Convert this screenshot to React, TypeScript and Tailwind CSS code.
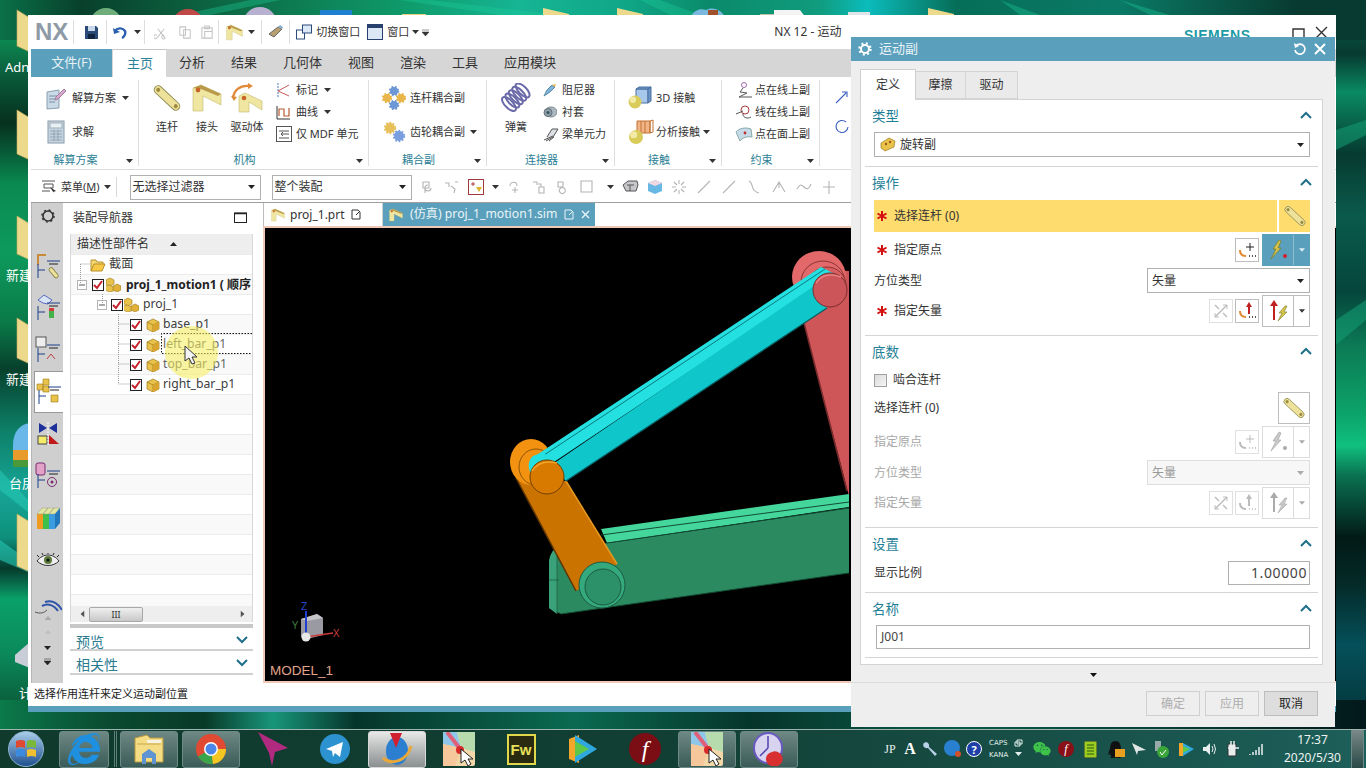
import React from "react";
import { FaInternetExplorer, FaWeixin, FaQq } from "react-icons/fa";

type N = React.ReactNode;

const Caret = ({ c = "#333", w = 7 }: { c?: string; w?: number }) => (
  <svg width={w} height={4} viewBox="0 0 7 4" className="shrink-0"><path d="M0 0h7L3.5 4z" fill={c} /></svg>
);
const Up = () => (
  <svg className="-mt-[3px]" width="12" height="8" viewBox="0 0 12 8"><path d="M1 7l5-5 5 5" fill="none" stroke="#1f6f8a" strokeWidth="2" /></svg>
);
const Down = () => (
  <svg className="-mt-[3px]" width="12" height="8" viewBox="0 0 12 8"><path d="M1 1l5 5 5-5" fill="none" stroke="#1f6f8a" strokeWidth="2" /></svg>
);

/* ---------- CAD icons ---------- */
const BarIcon = ({ s = 28 }: { s?: number }) => (
  <svg width={s} height={s} viewBox="0 0 28 28">
    <g transform="rotate(43 14 14)">
      <rect x="-2" y="10" width="32" height="8" rx="4" fill="#eee29a" stroke="#8f8a52" />
      <circle cx="2" cy="14" r="2" fill="#9b8a40" />
      <circle cx="26" cy="14" r="2" fill="#9b8a40" />
    </g>
  </svg>
);
const JointIcon = ({ s = 30 }: { s?: number }) => (
  <svg width={s} height={s} viewBox="0 0 30 30">
    <path d="M1 28V5l8-3 20 9v11L11 13v15z" fill="#efe6a2" stroke="#c4b870" strokeWidth=".6" />
    <path d="M1 5l8-3 20 9-3 2L9 6z" fill="#b99a4a" />
    <circle cx="6" cy="7" r="2.4" fill="#c8662a" />
  </svg>
);
const DriverIcon = () => (
  <svg width="32" height="32" viewBox="0 0 32 32">
    <path d="M8 30V14l6-3 17 8v9L18 20v10z" fill="#efe6a2" stroke="#c4b870" strokeWidth=".6" />
    <circle cx="13" cy="16" r="2.3" fill="#c8662a" />
    <path d="M2 16C3 8 9 3 18 4" fill="none" stroke="#e08a3a" strokeWidth="2.4" />
    <path d="M17 1l5 3-5 3zM0 14l3 5 3-4z" fill="#e08a3a" />
  </svg>
);
const SolIcon = () => (
  <svg width="22" height="24" viewBox="0 0 22 24">
    <path d="M2 6l12-2v18l-12 1z" fill="#c9d9e6" stroke="#8aa0b0" />
    <path d="M4 10h8M4 13h8M4 16h6" stroke="#7a92a5" />
    <path d="M11 11l8-8 2 2-8 8-3 1z" fill="#d9a6d0" stroke="#a0809a" />
  </svg>
);
const CalcIcon = () => (
  <svg width="18" height="24" viewBox="0 0 18 24">
    <rect x="1" y="1" width="16" height="22" fill="#c6d4df" stroke="#8b9ca9" />
    <rect x="3" y="3" width="12" height="5" fill="#e8f0f5" stroke="#9fb0bb" />
    <path d="M3 11h12M3 14h12M3 17h12M3 20h12M7 10v11M11 10v11" stroke="#92a5b3" />
  </svg>
);
const MarkIcon = () => (
  <svg width="15" height="16" viewBox="0 0 15 16">
    <path d="M2 1v14" stroke="#4a7ab0" strokeWidth="1" strokeDasharray="2 1" />
    <path d="M2 9l11-6M2 9l11 5" stroke="#c85a5a" />
  </svg>
);
const CurveIcon = () => (
  <svg width="15" height="15" viewBox="0 0 15 15">
    <path d="M1 1v13h13" fill="none" stroke="#333" />
    <path d="M3 11V4h5v7h5V3" fill="none" stroke="#b65a30" strokeWidth="1.2" />
  </svg>
);
const MdfIcon = () => (
  <svg width="16" height="16" viewBox="0 0 16 16">
    <rect x=".5" y=".5" width="15" height="15" fill="none" stroke="#555" />
    <path d="M3 5h10M13 8H5l2-2M5 8l2 2M3 12h10" fill="none" stroke="#555" />
  </svg>
);
const GearDot = ({ x, y, c, r = 4 }: { x: number; y: number; c: string; r?: number }) => (
  <g>
    <circle cx={x} cy={y} r={r} fill={c} stroke={c} strokeWidth="2.4" strokeDasharray="1.6 1.6" />
    <circle cx={x} cy={y} r={r - 1} fill={c} />
  </g>
);
const GearsA = () => (
  <svg width="24" height="24" viewBox="0 0 24 24">
    <GearDot x={12} y={5} c="#6e97d5" />
    <GearDot x={5} y={12} c="#e8b64a" />
    <GearDot x={19} y={12} c="#e8b64a" />
    <GearDot x={12} y={19} c="#6e97d5" />
  </svg>
);
const GearsB = () => (
  <svg width="24" height="24" viewBox="0 0 24 24">
    <GearDot x={8} y={8} c="#e8c05a" r={5} />
    <GearDot x={17} y={16} c="#7a9fe0" r={5} />
  </svg>
);
const SpringIcon = () => (
  <svg width="30" height="30" viewBox="0 0 30 30">
    {[0, 1, 2, 3, 4].map((i) => (
      <ellipse key={i} cx={8 + i * 3.4} cy={21 - i * 3.4} rx="9" ry="4" fill="none" stroke="#6a6aa8" strokeWidth="2" transform={`rotate(45 ${8 + i * 3.4} ${21 - i * 3.4})`} />
    ))}
  </svg>
);
const DamperIcon = () => (
  <svg width="14" height="14" viewBox="0 0 14 14">
    <path d="M1 13l3-6 5-5 3 2-5 5z" fill="#7db3d8" stroke="#5a8aa8" />
    <path d="M9 2l3 2 1-3z" fill="#e8b64a" />
  </svg>
);
const BushIcon = () => (
  <svg width="14" height="14" viewBox="0 0 14 14">
    <ellipse cx="8" cy="7" rx="6" ry="5" fill="#aab8c0" stroke="#7d8a92" />
    <ellipse cx="5" cy="7.5" rx="4" ry="4" fill="#8fa0aa" stroke="#606d75" />
    <circle cx="5" cy="7.5" r="1.6" fill="#35565f" />
  </svg>
);
const BeamIcon = () => (
  <svg width="16" height="15" viewBox="0 0 16 15">
    <path d="M1 13l9-4M4 10l5-8h6l-5 8-7 4M6 14l5-4" fill="#dcdfe4" stroke="#555" />
  </svg>
);
const Ball = ({ x, y, r }: { x: number; y: number; r: number }) => (
  <g>
    <circle cx={x} cy={y} r={r} fill="#d9cb5a" />
    <circle cx={x - r / 3} cy={y - r / 3} r={r / 2} fill="#f2eaa6" />
  </g>
);
const Contact3D = () => (
  <svg width="24" height="24" viewBox="0 0 24 24">
    <path d="M8 3h12v14H8z" fill="#a7c8ea" stroke="#4a70a0" />
    <path d="M8 3l3-2h12l-3 2zM20 3l3-2v14l-3 2z" fill="#6c95c8" stroke="#4a70a0" />
    <Ball x={7} y={16} r={6.5} />
  </svg>
);
const Contact2 = () => (
  <svg width="26" height="26" viewBox="0 0 26 26">
    <path d="M9 2h13v12H9z" fill="#f1b58a" stroke="#c2702f" />
    <path d="M13 2v12M17 2v12M22 2l3-1v12l-3 1z" fill="none" stroke="#c2702f" />
    <Ball x={8} y={18} r={7} />
  </svg>
);
const PtLine = () => (
  <svg width="18" height="16" viewBox="0 0 18 16">
    <circle cx="9" cy="3" r="2.5" fill="none" stroke="#a06ab0" />
    <path d="M8 6L5 10l7 1L4 15h13" fill="none" stroke="#555" />
  </svg>
);
const LineLine = () => (
  <svg width="18" height="16" viewBox="0 0 18 16">
    <circle cx="10" cy="6" r="4" fill="none" stroke="#b03a3a" />
    <path d="M1 10l7-3M8 10c0 4 5 5 8 3" fill="none" stroke="#555" />
  </svg>
);
const PtFace = () => (
  <svg width="18" height="16" viewBox="0 0 18 16">
    <path d="M1 6c3-4 10-5 15-3l1 8c-5-1-10 1-12 4z" fill="#c6dae8" stroke="#8aa" />
    <circle cx="10" cy="7" r="1.4" fill="#c03030" />
  </svg>
);
const Faint = ({ d, c = "#b4b4b4", s = 16 }: { d: string; c?: string; s?: number }) => (
  <svg width={s} height={s} viewBox="0 0 16 16" className="shrink-0"><path d={d} fill="none" stroke={c} strokeWidth="1.1" /></svg>
);

const Row = ({ icon, text, caret, cls }: { icon: N; text: string; caret?: boolean; cls: string }) => (
  <div className={"flex items-center " + cls}>
    {icon}
    <span className="whitespace-nowrap">{text}</span>
    {caret && <span className="ml-[1px]"><Caret /></span>}
  </div>
);
const Big = ({ icon, text }: { icon: N; text: string }) => (
  <div className="flex w-[40px] flex-col items-center pt-[6px]">
    <div className="flex h-[30px] items-center">{icon}</div>
    <span className="mt-[6px] leading-[16px] whitespace-nowrap">{text}</span>
  </div>
);
const Group = ({ cls, title, children }: { cls: string; title: string; children: N }) => (
  <div className={"flex shrink-0 " + cls}>
    <div className="flex min-w-0 flex-1 flex-col">
      <div className="h-[74px]">{children}</div>
      <div className="flex h-[19px] items-center pt-[2px]">
        <span className="flex-1 text-center text-[#2b8094]">{title}</span>
        <span className="flex w-[18px] justify-center"><Caret /></span>
      </div>
    </div>
    <div className="my-[3px] w-px bg-[#dedede]" />
  </div>
);

/* ---------- navigator ---------- */
const Check = () => (
  <svg width="12" height="12" viewBox="0 0 12 12" className="shrink-0">
    <rect x=".5" y=".5" width="11" height="11" fill="#fff" stroke="#222" />
    <path d="M2 6l3 3 5-7" fill="none" stroke="#c8202a" strokeWidth="2" />
  </svg>
);
const Box = () => (
  <svg width="10" height="10" viewBox="0 0 10 10" className="shrink-0">
    <rect x=".5" y=".5" width="9" height="9" fill="#fff" stroke="#b5b5b5" />
    <path d="M2 5h6" stroke="#555" />
  </svg>
);
const Cube = () => (
  <svg width="14" height="14" viewBox="0 0 14 14" className="shrink-0">
    <path d="M1 4l6-3 6 3v7l-6 3-6-3z" fill="#e8c24a" stroke="#9c7a1a" strokeWidth=".7" />
    <path d="M1 4l6 3 6-3M7 7v7" fill="none" stroke="#9c7a1a" strokeWidth=".7" />
    <path d="M7 7l6-3v7l-6 3z" fill="#d9a52e" />
  </svg>
);
const Cubes = () => (
  <svg width="15" height="15" viewBox="0 0 15 15" className="shrink-0">
    <path d="M4 1l4 2v4l-4 2-4-2V3z" fill="#e8c24a" stroke="#9c7a1a" strokeWidth=".6" />
    <path d="M3.500 8l4 2v4l-4 1-4-2V9z" fill="#e8c24a" stroke="#9c7a1a" strokeWidth=".6" />
    <path d="M11 7l4 2v4l-4 2-4-2V9z" fill="#e0b038" stroke="#9c7a1a" strokeWidth=".6" />
  </svg>
);
const FolderOpen = () => (
  <svg width="16" height="14" viewBox="0 0 16 14" className="shrink-0">
    <path d="M1 13V2h5l1 2h6v2" fill="#f2d777" stroke="#b8902a" />
    <path d="M1 13l3-7h11l-3 7z" fill="#f7c846" stroke="#b8902a" />
  </svg>
);
const TreeRow = ({ pl, lead, mid, name, bold, odd, muted }: { pl: string; lead?: N; mid: N; name: N; bold?: boolean; odd?: boolean; muted?: boolean }) => (
  <div className={"flex h-[20px] items-center overflow-hidden whitespace-nowrap border-t border-[#ececec] " + pl + (odd ? " bg-[#f9f9f9]" : " bg-white")}>
    {lead}
    {mid}
    <span className={(bold ? "ml-[5px] text-[12px] font-bold text-[#222]" : "ml-[3px] text-[#3c3c3c]") + (muted ? " opacity-80" : "")}>{name}</span>
  </div>
);

/* ---------- rail ---------- */
const RailCell = ({ active, children }: { active?: boolean; children: N }) => (
  <div className={"flex h-[42px] items-center justify-center " + (active ? "ml-[2px] border-y border-l border-[#9a9a9a] bg-white" : "")}>{children}</div>
);
const Tee = ({ children }: { children: N }) => (
  <svg width="26" height="28" viewBox="0 0 26 28">
    {children}
    <path d="M10 18H3M3 12v14M12 9h13" fill="none" stroke="#1c3f8a" strokeWidth="1" />
    <path d="M14 12h9" stroke="#222" />
  </svg>
);

/* ---------- dialog ---------- */
const Star = () => (
  <svg width="12" height="12" viewBox="0 0 12 12" className="mr-[6px] ml-[2px] shrink-0">
    <path d="M6 1v10M1.500 3.500l9 5M10.500 3.500l-9 5" stroke="#d40f0f" strokeWidth="2" />
  </svg>
);
const Section = ({ title, children, cls }: { title: string; children: N; cls: string }) => (
  <div className={"mr-[4px] ml-[4px] border-b border-[#d4d4d4] " + cls}>
    <div className="flex h-[32px] items-center justify-between pr-[6px] pl-[7px]">
      <span className="text-[13.5px] text-[#1f7f97]">{title}</span>
      <Up />
    </div>
    <div className="pr-[8px] pl-[9px]">{children}</div>
  </div>
);
const PtIcon = ({ dim }: { dim?: boolean }) => (
  <svg width="20" height="20" viewBox="0 0 20 20">
    <path d="M13 3v8M9 7h8" stroke={dim ? "#bbb" : "#222"} />
    <path d="M3 10c0 4 2 6 6 6" fill="none" stroke={dim ? "#bbb" : "#e28a32"} strokeWidth="2" />
    <path d="M12 16h1m2 0h1m2 0h1" stroke={dim ? "#bbb" : "#222"} strokeWidth="1.500" />
  </svg>
);
const VecIcon = ({ dim }: { dim?: boolean }) => (
  <svg width="20" height="20" viewBox="0 0 20 20">
    <path d="M12 13V4" stroke={dim ? "#bbb" : "#c02020"} strokeWidth="2" />
    <path d="M12 1l3 5H9z" fill={dim ? "#bbb" : "#c02020"} />
    <path d="M3 10c0 4 2 6 6 6" fill="none" stroke={dim ? "#bbb" : "#e28a32"} strokeWidth="2" />
    <path d="M12 16h1m2 0h1m2 0h1" stroke={dim ? "#bbb" : "#222"} strokeWidth="1.500" />
  </svg>
);
const SwapIcon = () => (
  <svg width="16" height="16" viewBox="0 0 16 16">
    <path d="M2 14L14 2M2 2l4 4M10 10l4 4" stroke="#bdbdbd" strokeWidth="1.500" />
    <path d="M10 2h4v4M2 10v4h4" fill="none" stroke="#bdbdbd" />
  </svg>
);
const Bolt = ({ dim, dot }: { dim?: boolean; dot?: boolean }) => (
  <svg width="22" height="22" viewBox="0 0 22 22">
    <path d="M12 1L6 10h3l-5 10 10-11h-3l3-7z" fill={dim ? "#c8c8c8" : "#d6c44a"} stroke={dim ? "#aaa" : "#7a7a2a"} strokeWidth=".7" />
    {dot && <circle cx="18" cy="17" r="2" fill={dim ? "#aaa" : "#d02030"} />}
  </svg>
);
const VecBolt = ({ dim }: { dim?: boolean }) => (
  <svg width="22" height="22" viewBox="0 0 22 22">
    <path d="M7 20V5" stroke={dim ? "#aaa" : "#c02020"} strokeWidth="2" />
    <path d="M7 0l4 6H3z" fill={dim ? "#aaa" : "#c02020"} />
    <path d="M18 6l-6 7h3l-4 8 9-9h-3l3-6z" fill={dim ? "#c8c8c8" : "#d6c44a"} stroke={dim ? "#aaa" : "#7a7a2a"} strokeWidth=".6" />
  </svg>
);
const Small = ({ children, dim }: { children: N; dim?: boolean }) => (
  <div className={"flex h-[24px] w-[24px] items-center justify-center border bg-white " + (dim ? "border-[#e0e0e0]" : "border-[#bdbdbd]")}>{children}</div>
);
const Split = ({ icon, active, dim }: { icon: N; active?: boolean; dim?: boolean }) => (
  <div className={"ml-[3px] flex h-[32px] w-[48px] border " + (active ? "border-[#5a9fbb] bg-[#5a9fbb]" : dim ? "border-[#dcdcdc] bg-white" : "border-[#bdbdbd] bg-white")}>
    <div className="flex flex-1 items-center justify-center">{icon}</div>
    <div className={"flex w-[16px] items-center justify-center border-l " + (active ? "border-[#8fbdd0]" : dim ? "border-[#dcdcdc]" : "border-[#bdbdbd]")}>
      <Caret c={active ? "#dfeff5" : dim ? "#aaa" : "#333"} w={6} />
    </div>
  </div>
);
const Select = ({ text, cls, icon, dim }: { text: string; cls: string; icon?: N; dim?: boolean }) => (
  <div className={"flex h-[25px] items-center border " + cls + (dim ? " border-[#dedede] bg-[#f7f7f7] text-[#9a9a9a]" : " border-[#b0b0b0] bg-white")}>
    {icon}
    <span className="flex-1 whitespace-nowrap">{text}</span>
    <span className="mr-[5px]"><Caret c={dim ? "#aaa" : "#222"} /></span>
  </div>
);
const DlgBtn = ({ text, on }: { text: string; on?: boolean }) => (
  <div className={"flex h-[25px] w-[54px] items-center justify-center border " + (on ? "border-[#bdbdbd] bg-[#dddddd] text-[#222]" : "border-[#cfcfcf] bg-[#eeeeee] text-[#adadad]")}>{text}</div>
);

/* ---------- taskbar ---------- */
const Slot = ({ boxed, active, cls, children }: { boxed?: boolean; active?: boolean; cls: string; children: N }) => (
  <div className={"flex h-[37px] items-center justify-center rounded-[3px] border " + cls + (active ? " border-[#d8d8d8] bg-linear-to-b from-[#e8e8e8] to-[#8a8f8f]" : boxed ? " border-[#6d8a86] bg-linear-to-b from-[#6e8884] to-[#3a5c58]" : " border-transparent")}>{children}</div>
);
const Palette = () => (
  <svg width="32" height="34" viewBox="0 0 32 34">
    <rect x="0" width="32" height="34" rx="2" fill="#f2d8a8" />
    <path d="M0 0h14L18 16 0 12z" fill="#8ec7e8" />
    <path d="M14 0h18v20L18 16z" fill="#b6dcae" />
    <path d="M0 12l18 4-6 18H0z" fill="#f5c79a" />
    <path d="M4 0l14 18" stroke="#e0607a" strokeWidth="4" />
    <circle cx="17" cy="18" r="4" fill="#d82a2a" />
    <path d="M18 17v14l4-3 3 6 3-2-3-5h5z" fill="#fff" stroke="#222" />
  </svg>
);

export default function App() {
  return (
    <div className="relative h-[768px] w-[1366px] overflow-hidden bg-[#0a3a2a] font-['Noto_Sans','Noto_Sans_CJK_SC',sans-serif] text-[11px] text-[#333]">
      {/* wallpaper */}
      <svg className="absolute inset-0" width="1366" height="768" viewBox="0 0 1366 768">
        <defs>
          <linearGradient id="wl" x1="0" y1="0" x2="0" y2="1">
            {[["0", "#075c3a"], [".05", "#0c8a52"], [".1", "#0a5a3a"], [".16", "#06301f"], [".24", "#0a8a50"], [".33", "#0d9a5c"], [".42", "#0a7a48"], [".48", "#07402c"], [".56", "#0d8068"], [".64", "#17a597"], [".7", "#0e8f7c"], [".74", "#063a2c"], [".78", "#0aa06a"], [".85", "#0b8a5c"], [".92", "#0a5c3a"], ["1", "#063020"]].map(([o, c]) => (
              <stop key={o} offset={o} stopColor={c} />
            ))}
          </linearGradient>
          <linearGradient id="wr" x1="0" y1="0" x2="0" y2="1">
            {[["0", "#0a6a4e"], [".07", "#073a30"], [".12", "#0a8a62"], [".2", "#063a30"], [".28", "#0a5a4c"], [".38", "#05463c"], [".45", "#0c7a55"], [".54", "#0ca46a"], [".58", "#10c07f"], [".62", "#0a7050"], [".7", "#021a16"], [".76", "#042a28"], [".84", "#05505a"], [".92", "#043a40"], ["1", "#02181a"]].map(([o, c]) => (
              <stop key={o} offset={o} stopColor={c} />
            ))}
          </linearGradient>
          <linearGradient id="wt" x1="0" y1="0" x2="1" y2="0">
            {[["0", "#0a7048"], [".06", "#08402c"], [".18", "#0d6e48"], [".3", "#0f9c6c"], [".38", "#16b594"], [".46", "#0fa686"], [".52", "#0a8a6a"], [".6", "#109c7e"], [".635", "#0bbcbc"], [".7", "#066e58"], [".82", "#0a7a66"], [".95", "#083a30"], ["1", "#073a30"]].map(([o, c]) => (
              <stop key={o} offset={o} stopColor={c} />
            ))}
          </linearGradient>
          <linearGradient id="wb" x1="0" y1="0" x2="1" y2="0">
            {[["0", "#0b7a4a"], [".08", "#0a4a30"], [".15", "#083a28"], [".2", "#18967a"], [".26", "#06352a"], [".42", "#0a6a50"], [".55", "#06352a"], [".7", "#0a5a48"], [".85", "#084038"], ["1", "#02181a"]].map(([o, c]) => (
              <stop key={o} offset={o} stopColor={c} />
            ))}
          </linearGradient>
        </defs>
        <rect x="0" y="0" width="60" height="768" fill="url(#wl)" />
        <rect x="1320" y="0" width="46" height="768" fill="url(#wr)" />
        <rect x="0" y="0" width="1366" height="40" fill="url(#wt)" />
        <rect x="0" y="700" width="1366" height="40" fill="url(#wb)" />
        <path d="M0 470L28 500V512L0 490zM0 540L28 560V572L0 560z" fill="#25c8b4" opacity=".6" />
        <path d="M430 0L560 15H500L400 0zM660 0L700 15H670L640 0zM1000 0L1040 15H1020zM1120 0L1170 15H1150zM250 0L180 15H210L280 0z" fill="#1ecf9a" opacity=".35" />
        <path d="M1336 130L1366 120V135L1336 150zM1336 320L1366 300V320L1336 345z" fill="#14a678" opacity=".5" />
        <circle cx="106" cy="24" r="16" fill="#6fae7a" />
        <circle cx="188" cy="25" r="16" fill="#c04a48" />
        <circle cx="260" cy="24" r="17" fill="#b8b0d0" />
        <rect x="320" y="10" width="32" height="20" fill="#1f7fd0" />
        {[543, 617, 928].map((x) => (<path key={x} d="M0 0l26 6v24H0z" transform={`translate(${x} 8)`} fill="#ecd98c" />))}
        <path d="M402 14h24v10h-24z" fill="#e8d080" />
        <path d="M690 18c4-8 10-10 16-8 6-4 16 0 18 6l10 4v8h-44z" fill="#7ab8e0" />
        <rect x="708" y="10" width="10" height="10" fill="#a0522d" />
        <rect x="760" y="14" width="14" height="10" fill="#b8c4a8" />
        <path d="M774 10h26l6 8v10h-32z" fill="#f4f4f4" />
        <rect x="848" y="12" width="22" height="10" fill="#dfe4e8" />
        {/* desktop icons peeking out at the left */}
        {[{ t: 10, h: 42 }, { t: 110, h: 50 }, { t: 216, h: 44 }, { t: 318, h: 46 }, { t: 514, h: 58 }].map((f) => (
          <path key={f.t} d={`M17 ${f.t}L30 ${f.t + 8}V${f.t + f.h}L17 ${f.t + f.h - 6}z`} fill="#ecd98c" stroke="#c4ad60" strokeWidth=".6" />
        ))}
        <path d="M13 445C13 432 20 424 30 423V467H13z" fill="#6ab8ea" />
        <path d="M13 450H30V460H13z" fill="#e89a2a" />
        <path d="M13 460H30V467H13z" fill="#4a9a3a" />
        <path d="M15 655L30 642V668L15 662z" fill="#c8cdd8" />
      </svg>
      <span className="absolute top-[58px] left-[5px] text-[13px] text-white">Adn</span>
      <span className="absolute top-[266px] left-[6px] text-[13px] text-white">新建</span>
      <span className="absolute top-[370px] left-[6px] text-[13px] text-white">新建</span>
      <span className="absolute top-[474px] left-[9px] text-[13px] text-white">台房</span>
      <span className="absolute top-[684px] left-[19px] text-[13px] text-white">计</span>

      {/* main NX window */}
      <div className="absolute top-[15px] left-[28px] flex h-[697px] w-[1308px] flex-col bg-white">
        {/* title bar */}
        <div className="relative flex h-[34px] shrink-0 items-center text-[11px]">
          <span className="ml-[7px] font-['Liberation_Sans',sans-serif] text-[24px] font-bold text-[#8e9aa5]">NX</span>
          <span className="ml-[5px] h-[24px] w-px bg-[#ddd]" />
          <svg className="ml-[10px]" width="15" height="15" viewBox="0 0 15 15"><path d="M1 1h11l2 2v11H1z" fill="#2a4a78" /><rect x="4" y="1" width="7" height="5" fill="#c8d8ea" /><rect x="4" y="9" width="7" height="5" fill="#10243f" /></svg>
          <span className="ml-[7px] h-[24px] w-px bg-[#ddd]" />
          <svg className="ml-[6px]" width="14" height="14" viewBox="0 0 14 14"><path d="M2 6c3-4 8-3 10 0 1 3-1 6-3 7" fill="none" stroke="#2c5fb0" strokeWidth="2.400" /><path d="M0 3l1 6 6-2z" fill="#2c5fb0" /></svg>
          <span className="ml-[7px]"><Caret /></span>
          <span className="ml-[3px] mr-[4px] h-[24px] w-px bg-[#ddd]" />
          <span className="ml-[5px]"><Faint s={15} c="#c4c4c4" d="M3 14L11 4M12 14L4 4M3 11a2 2 0 100 3M11 11a2 2 0 101 3" /></span>
          <span className="ml-[9px]"><Faint s={15} c="#c4c4c4" d="M2 2h6v9H2zM6 5h7v9H6z" /></span>
          <span className="ml-[7px]"><Faint s={15} c="#c4c4c4" d="M2 3h11v11H2zM5 1h5v3H5zM5 7h8v7H5z" /></span>
          <span className="ml-[3px] h-[24px] w-px bg-[#ddd]" />
          <span className="ml-[7px]"><JointIcon s={17} /></span>
          <span className="ml-[5px]"><Caret /></span>
          <span className="ml-[6px] h-[24px] w-px bg-[#ddd]" />
          <svg className="ml-[6px]" width="16" height="14" viewBox="0 0 16 14"><path d="M1 9l9-7 4 2-8 8z" fill="#b9a070" stroke="#666" /><path d="M10 2l4 2 1-2-3-2z" fill="#8ab0d0" /></svg>
          <span className="ml-[5px] h-[24px] w-px bg-[#ddd]" />
          <svg className="ml-[6px]" width="16" height="16" viewBox="0 0 16 16"><rect x=".5" y="6" width="8" height="9" fill="#fff" stroke="#2a4a78" /><rect x="6.500" y="1" width="9" height="8" fill="#dce8f5" stroke="#2a4a78" /></svg>
          <span className="ml-[4px] whitespace-nowrap">切换窗口</span>
          <svg className="ml-[7px]" width="16" height="16" viewBox="0 0 16 16"><rect x=".5" y=".5" width="15" height="15" fill="#dbe7f5" stroke="#28406e" /><path d="M1 1h14v3H1z" fill="#28406e" /></svg>
          <span className="ml-[4px] whitespace-nowrap">窗口</span>
          <span className="ml-[3px]"><Caret /></span>
          <svg className="ml-[3px]" width="7" height="7" viewBox="0 0 7 7"><path d="M0 1h7M0 3h7l-3.500 4z" fill="#333" stroke="#333" strokeWidth=".5" /></svg>
          <span className="ml-[345px] text-[12px] whitespace-nowrap">NX 12 - 运动</span>
          <span className="absolute top-[10px] left-[1156px] font-['Liberation_Sans',sans-serif] text-[14px] font-bold tracking-[.5px] text-[#1d9aa5]">SIEMENS</span>
          <svg className="absolute top-[12px] left-[1264px]" width="13" height="12" viewBox="0 0 13 12"><path d="M1 2h11v9H1z" fill="none" stroke="#333" strokeWidth="1.400" /></svg>
          <svg className="absolute top-[11px] left-[1287px]" width="13" height="13" viewBox="0 0 13 13"><path d="M1 1l11 11M12 1L1 12" stroke="#333" strokeWidth="1.400" /></svg>
        </div>

        {/* ribbon tabs */}
        <div className="ml-[3px] flex h-[28px] shrink-0 items-stretch bg-[#d6d6d6] text-[13px] leading-[27px]">
          <span className="w-[81px] bg-[#5a9fbb] text-center text-[#e6f1f5]">文件(F)</span>
          <span className="ml-px border-t border-[#c6c6c6] bg-white pr-[13px] pl-[14px] text-[#2a8296]">主页</span>
          {["分析", "结果", "几何体", "视图", "渲染", "工具", "应用模块"].map((t) => (
            <span key={t} className="px-[13px] whitespace-nowrap">{t}</span>
          ))}
        </div>

        {/* ribbon */}
        <div className="ml-[3px] flex h-[93px] shrink-0 overflow-hidden border-b border-[#dcdcdc] text-[11px]">
          <Group cls="w-[108px]" title="解算方案">
            <div className="pt-[4px] pl-[14px]">
              <Row cls="h-[34px] gap-[5px]" icon={<SolIcon />} text="解算方案" caret />
              <Row cls="h-[34px] gap-[7px]" icon={<span className="ml-[2px]"><CalcIcon /></span>} text="求解" />
            </div>
          </Group>
          <Group cls="w-[230px]" title="机构">
            <div className="flex pl-[8px]">
              <Big icon={<BarIcon />} text="连杆" />
              <Big icon={<JointIcon />} text="接头" />
              <Big icon={<DriverIcon />} text="驱动体" />
              <div className="ml-[9px] pt-[2px]">
                <Row cls="h-[22px] gap-[5px]" icon={<MarkIcon />} text="标记" caret />
                <Row cls="h-[22px] gap-[5px]" icon={<CurveIcon />} text="曲线" caret />
                <Row cls="h-[22px] gap-[4px]" icon={<MdfIcon />} text="仅 MDF 单元" />
              </div>
            </div>
          </Group>
          <Group cls="w-[118px]" title="耦合副">
            <div className="pt-[4px] pl-[13px]">
              <Row cls="h-[34px] gap-[4px]" icon={<GearsA />} text="连杆耦合副" />
              <Row cls="h-[34px] gap-[4px]" icon={<GearsB />} text="齿轮耦合副" caret />
            </div>
          </Group>
          <Group cls="w-[128px]" title="连接器">
            <div className="flex pl-[9px]">
              <Big icon={<SpringIcon />} text="弹簧" />
              <div className="ml-[7px] pt-[2px]">
                <Row cls="h-[22px] gap-[5px]" icon={<DamperIcon />} text="阻尼器" />
                <Row cls="h-[22px] gap-[5px]" icon={<BushIcon />} text="衬套" />
                <Row cls="h-[22px] gap-[3px]" icon={<BeamIcon />} text="梁单元力" />
              </div>
            </div>
          </Group>
          <Group cls="w-[107px]" title="接触">
            <div className="pt-[4px] pl-[13px]">
              <Row cls="h-[34px] gap-[4px]" icon={<Contact3D />} text="3D 接触" />
              <Row cls="h-[34px] gap-[2px]" icon={<Contact2 />} text="分析接触" caret />
            </div>
          </Group>
          <Group cls="w-[98px]" title="约束">
            <div className="pt-[2px] pl-[13px]">
              <Row cls="h-[22px] gap-[2px]" icon={<PtLine />} text="点在线上副" />
              <Row cls="h-[22px] gap-[2px]" icon={<LineLine />} text="线在线上副" />
              <Row cls="h-[22px] gap-[2px]" icon={<PtFace />} text="点在面上副" />
            </div>
          </Group>
          <div className="flex flex-col gap-[14px] pt-[12px] pl-[14px]">
            <Faint c="#3a5fc0" d="M2 14L12 4M8 3h5v5" />
            <Faint c="#3a5fc0" d="M14 8a6 6 0 11-2-5" />
          </div>
        </div>

        {/* selection bar */}
        <div className="ml-[3px] flex h-[33px] shrink-0 items-center border-b border-[#9e9e9e] pt-[2px] text-[11px]">
          <svg className="ml-[10px]" width="16" height="16" viewBox="0 0 16 16"><path d="M1 2h13M3 5h9v4H3zM1 12h8" fill="none" stroke="#555" /><path d="M9 8l6 4-3 1 2 3z" fill="#333" /></svg>
          <span className="ml-[4px] whitespace-nowrap">菜单(<span className="underline">M</span>)</span>
          <span className="ml-[4px]"><Caret /></span>
          <span className="ml-[5px] h-[20px] w-px bg-[#d8d8d8]" />
          <div className="ml-[13px]"><Select text="无选择过滤器" cls="w-[131px] h-[20px] pl-[2px] text-[12px]" /></div>
          <div className="ml-[11px]"><Select text="整个装配" cls="w-[140px] h-[20px] pl-[2px] text-[12px]" /></div>
          <div className="ml-[8px] flex items-center gap-[8px]">
            <Faint d="M3 3h6v6H3zM8 6a3 3 0 103 3M5 9v5" />
            <Faint d="M1 4h4v4M7 7l4 3-1 4M11 3h3" />
            <svg className="shrink-0" width="16" height="16" viewBox="0 0 16 16"><rect x=".5" y=".5" width="15" height="15" fill="#fff" stroke="#9c3b3b" /><path d="M3 5h4M5 3v4" stroke="#b04040" /><path d="M8 8l3 5 3-5z" fill="#e0b030" /></svg>
            <Caret />
            <Faint d="M3 7c0-5 7-5 7 0M8 8v6M5 11h6" />
            <Faint d="M2 3h4v3M7 5h3v3M8 8h5v6H8z" />
            <Faint d="M3 3h5v5H3zM9 9a3 3 0 100 5 3 3 0 000-5" />
            <Faint d="M2 2h11v11H2z" />
            <span className="ml-[4px]"><Caret /></span>
            <svg className="shrink-0" width="17" height="16" viewBox="0 0 17 16"><path d="M1 6l5-4h9l1 4-2 6H4z" fill="#c7c5ca" stroke="#555" /><path d="M5 6h7M8 6v6" stroke="#555" /></svg>
            <svg className="shrink-0" width="16" height="16" viewBox="0 0 16 16"><path d="M1 4l7-3 7 3v8l-7 3-7-3z" fill="#68b8e6" /><path d="M1 4l7-3 7 3-7 3z" fill="#f0d8e0" /></svg>
            <div className="flex items-center gap-[9px]">
              <Faint d="M8 1v4M8 11v4M1 8h4M11 8h4M3 3l3 3M13 3l-3 3M3 13l3-3M13 13l-3-3" />
              <Faint d="M2 14L14 2" />
              <Faint d="M2 14L14 2M7 9l2-2" />
              <Faint d="M3 2c5 2 1 10 10 12" />
              <Faint d="M2 13L8 3l6 10M8 3v6" />
              <Faint d="M1 10c3-5 4-5 7-2s5 2 7-3" />
              <Faint d="M8 2v13M2 8h12" />
            </div>
          </div>
        </div>

        {/* body */}
        <div className="ml-[3px] flex h-[480px] shrink-0">
          {/* rail */}
          <div className="flex w-[32px] shrink-0 flex-col border-l border-[#b5b5b5] bg-[#cfcfcf]">
            <div className="flex h-[26px] items-center justify-center">
              <svg width="14" height="14" viewBox="0 0 14 14"><circle cx="7" cy="7" r="5" fill="none" stroke="#333" strokeWidth="1.600" /><circle cx="7" cy="7" r="6" fill="none" stroke="#333" strokeWidth="1.500" strokeDasharray="2 2.700" /></svg>
            </div>
            <div className="h-[16px]" />
            <RailCell><Tee><path d="M3 13V3h8" fill="none" stroke="#c98a3a" strokeWidth="2" /><g transform="rotate(50 18 20)"><rect x="13" y="18" width="12" height="4" rx="2" fill="#eee29a" stroke="#8f8a52" /></g></Tee></RailCell>
            <RailCell><Tee><path d="M3 6l6-5 8 5-4 4-5-1z" fill="#d8e4f4" stroke="#5a6ac0" /><path d="M14 14h5v10h-5z" fill="#44b24a" /><path d="M14 14h5v3h-5z" fill="#d83a3a" /></Tee></RailCell>
            <RailCell><Tee><rect x="1" y="1" width="10" height="10" fill="#eee" stroke="#555" /><path d="M12 23l4-5 4 5" fill="none" stroke="#c04040" /></Tee></RailCell>
            <RailCell active><Tee><path d="M1 6h6v6H1zM7 1h6v6H7zM7 8h6v6H7z" fill="#e8c24a" stroke="#9c7a1a" strokeWidth=".6" /><path d="M15 17h7v7h-7z" fill="#e8c24a" stroke="#9c7a1a" strokeWidth=".6" /></Tee></RailCell>
            <RailCell>
              <svg width="24" height="24" viewBox="0 0 24 24"><path d="M3 1l8 5-8 5zM21 1l-8 5 8 5z" fill="#1c2f9a" /><rect x="2" y="14" width="9" height="8" fill="#f4ec6a" stroke="#444" /><path d="M13 13l10 9H13z" fill="#c21a1a" /><path d="M12 0v24" stroke="#fff" strokeDasharray="2 1" /></svg>
            </RailCell>
            <RailCell><Tee><rect x="1" y="1" width="9" height="12" rx="2" fill="#e3a2c8" stroke="#7a2a70" /><circle cx="17" cy="20" r="4.500" fill="none" stroke="#7a2a70" /><circle cx="17" cy="20" r="1.500" fill="#7a2a70" /></Tee></RailCell>
            <RailCell>
              <svg width="24" height="22" viewBox="0 0 24 22"><path d="M1 7h6v15H1z" fill="#f09a20" /><path d="M7 7h6v15H7z" fill="#3fc04a" /><path d="M13 7h6v15h-6z" fill="#3a9be0" /><path d="M1 7l5-6h6L7 7zM7 7l5-6h6l-5 6zM13 7l5-6h6l-5 6z" fill="#e2e8a0" stroke="#998" strokeWidth=".5" /><path d="M19 7l5-6v15l-5 6z" fill="#2277bb" /></svg>
            </RailCell>
            <RailCell>
              <svg width="24" height="14" viewBox="0 0 24 14"><path d="M1 8c6-8 16-8 22 0-6 6-16 6-22 0z" fill="#eee" stroke="#333" /><circle cx="12" cy="7" r="4" fill="#5a7a3a" /><circle cx="12" cy="7" r="1.600" fill="#111" /><path d="M3 4l-2-2M7 2L6 0M12 1V0M17 2l1-2M21 4l2-2" stroke="#222" /></svg>
            </RailCell>
            <div className="h-[5px]" />
            <RailCell>
              <svg width="28" height="16" viewBox="0 0 28 16"><path d="M1 13c5 2 9 1 12-2" fill="none" stroke="#555" /><path d="M8 7c6-3 12-1 16 5M11 3c6-2 12 0 17 8" fill="none" stroke="#2f55a8" strokeWidth="2" /></svg>
            </RailCell>
            <div className="-mt-[12px] flex flex-col items-center gap-[10px]">
              <span className="rotate-180"><Caret c="#a8a8a8" w={8} /></span>
              <span className="rotate-180"><Caret c="#bcbcbc" w={6} /></span>
              <div className="mt-[2px] flex flex-col items-center gap-[8px]"><Caret c="#222" /><svg width="7" height="7" viewBox="0 0 7 7"><path d="M0 1h7M0 3h7l-3.500 4z" fill="#222" stroke="#222" strokeWidth=".5" /></svg></div>
            </div>
          </div>

          {/* navigator */}
          <div className="relative flex w-[200px] shrink-0 flex-col pl-[7px]">
            <div className="flex h-[31px] shrink-0 items-center justify-between pr-[16px] pb-[2px] pl-[3px] text-[12px]">
              <span>装配导航器</span>
              <svg width="13" height="11" viewBox="0 0 13 11"><rect x=".5" y="1" width="12" height="9.500" fill="none" stroke="#222" /><path d="M0 1.500h13" stroke="#222" strokeWidth="1.500" /></svg>
            </div>
            <div className="mr-[10px] border-x border-[#d8d8d8]">
              <div className="flex h-[20px] items-center bg-[#eeeeee] pl-[6px] text-[12px]">
                描述性部件名
                <span className="ml-[20px] rotate-180"><Caret c="#222" w={9} /></span>
              </div>
              <div className="h-[352px] overflow-hidden text-[12.2px]">
                <TreeRow pl="pl-[19px]" mid={<FolderOpen />} name="截面" />
                <TreeRow odd bold pl="pl-[6px]" lead={<><Box /><span className="ml-[5px]"><Check /></span></>} mid={<span className="ml-[2px]"><Cubes /></span>} name="proj_1_motion1 ( 顺序" />
                <TreeRow pl="pl-[26px]" lead={<><Box /><span className="ml-[4px]"><Check /></span></>} mid={<span className="ml-[1px]"><Cubes /></span>} name={<span className="ml-[1px]">proj_1</span>} />
                {["base_p1", "left_bar_p1", "top_bar_p1", "right_bar_p1"].map((n, i) => (
                  <TreeRow key={n} odd={i % 2 === 0} pl="pl-[59px]" lead={<Check />} mid={<span className="ml-[4px]"><Cube /></span>} name={n} muted={i === 1 || i === 2} />
                ))}
                {Array.from({ length: 11 }).map((_, i) => (
                  <div key={i} className={"h-[20px] border-t border-[#ececec] " + (i % 2 === 0 ? "bg-[#f9f9f9]" : "bg-white")} />
                ))}
              </div>
              <div className="flex h-[16px] items-center bg-[#eeeeee]">
                <span className="ml-[8px] rotate-90"><Caret c="#555" w={7} /></span>
                <div className="ml-[3px] flex h-[15px] w-[54px] items-center justify-center rounded-[2px] border border-[#a8a8a8] bg-linear-to-b from-[#f0f0f0] to-[#c8c8c8] text-[9px] leading-none">III</div>
                <span className="ml-auto mr-[6px] -rotate-90"><Caret c="#555" w={7} /></span>
              </div>
            </div>
            <div className="mt-[2px] mr-[10px] h-[4px] bg-[#c8c8c8]" />
            <div className="mr-[10px] flex h-[23px] items-center justify-between border-b-2 border-[#d0d0d0] pt-[5px] pr-[5px] pl-[6px] text-[14px] text-[#2a7a90]"><span>预览</span><Down /></div>
            <div className="mr-[10px] flex h-[24px] items-center justify-between border-b-2 border-[#d0d0d0] pt-[5px] pr-[5px] pl-[6px] text-[14px] text-[#2a7a90]"><span>相关性</span><Down /></div>

            {/* tree connector lines and focus box */}
            <svg className="pointer-events-none absolute top-0 left-0" width="200" height="200" viewBox="0 0 200 200">
              <path d="M17.500 61v20M17.500 61h10M39.500 91v11M55.500 111v70M55.500 121h11M55.500 141h11M55.500 161h11M55.500 181h11" fill="none" stroke="#9a9a9a" strokeDasharray="1 1" />
              <path d="M189 130.500H98.500V150.500H189" fill="none" stroke="#111" strokeDasharray="1.500 1.500" />
            </svg>
          </div>

          {/* graphics */}
          <div className="flex min-w-0 flex-1 flex-col">
            <div className="flex h-[23px] shrink-0 items-stretch border-l border-[#bcbcbc] text-[12px]">
              <div className="ml-[1px] flex w-[118px] items-center border-r border-[#cfcfcf] bg-white pl-[6px]">
                <JointIcon s={14} />
                <span className="ml-[5px]">proj_1.prt</span>
                <svg className="ml-[6px]" width="10" height="11" viewBox="0 0 10 11"><path d="M1 1h6l2 2v7H1z" fill="none" stroke="#333" /><path d="M5 6l4-4" stroke="#333" /></svg>
              </div>
              <div className="flex w-[212px] items-center bg-[#5a9fbb] pl-[6px] text-[12.2px] text-[#eaf5f9]">
                <JointIcon s={14} />
                <span className="ml-[7px] whitespace-nowrap">(仿真) proj_1_motion1.sim</span>
                <svg className="ml-[7px]" width="10" height="11" viewBox="0 0 10 11"><path d="M1 1h6l2 2v7H1z" fill="none" stroke="#eaf5f9" /><path d="M5 6l4-4" stroke="#eaf5f9" /></svg>
                <svg className="ml-[7px]" width="9" height="9" viewBox="0 0 9 9"><path d="M1 1l7 7M8 1L1 8" stroke="#eaf5f9" strokeWidth="1.400" /></svg>
              </div>
            </div>
            <div className="relative min-h-0 flex-1 overflow-hidden border-2 border-r-0 border-[#f0c8b8] bg-black">
              <svg className="absolute top-0 left-0" width="1070" height="456" viewBox="266 227 1070 456">
                {/* red link */}
                <path d="M805 322L850 495V270L825 268z" fill="#ce5558" />
                <path d="M805 322L848 490" stroke="#7a2c2c" strokeWidth="1.500" />
                <ellipse cx="820" cy="276" rx="27" ry="26" fill="#e2686a" />
                <ellipse cx="824" cy="281" rx="22" ry="21" fill="none" stroke="#8a3434" />
                <ellipse cx="828" cy="284" rx="19" ry="18" fill="#d95e60" stroke="#8a3434" />
                {/* green base */}
                <path d="M550 607V560Q552 549 558 547L610 542 850 507V572L562 613z" fill="#2b8a60" />
                <path d="M550 607V560Q552 549 558 547V613z" fill="#3aa27a" />
                <path d="M558 548V613" stroke="#1f5f44" strokeWidth=".8" />
                <path d="M550 579H560" stroke="#1f5f44" strokeWidth=".8" />
                <path d="M602 528L850 493V506L608 542z" fill="#45d69c" />
                <path d="M602 534L850 501" stroke="#134c34" strokeWidth="1" />
                <path d="M608 542L850 507" stroke="#134c34" strokeWidth="1" />
                <path d="M562 613L850 572" stroke="#134c34" strokeWidth="1" />
                {/* orange link */}
                <path d="M517 477L577 590 618 563 567 480z" fill="#cb7300" />
                <path d="M517 477L577 590" stroke="#5e3400" strokeWidth="1.500" />
                <path d="M567 480L618 563" stroke="#e89a20" strokeWidth="1.500" />
                <ellipse cx="532" cy="461" rx="21" ry="23" fill="#f29210" />
                <ellipse cx="537" cy="466" rx="17" ry="18" fill="none" stroke="#8e5406" />
                {/* cyan link */}
                <path d="M533 457L822 266 836 273 552 463 533 476z" fill="#24e0e0" />
                <path d="M536 460L826 268" stroke="#0a7a80" strokeWidth="1" />
                <path d="M551 465L815 285 828 307 567 480z" fill="#0fc6ca" />
                <path d="M567 480L828 307" stroke="#075c60" strokeWidth="1.200" />
                <path d="M533 476Q526 462 534 455L545 451 552 463z" fill="#24e0e0" />
                {/* caps */}
                <circle cx="548" cy="476" r="17" fill="#d97a00" stroke="#713f00" />
                <path d="M533 470Q541 458 558 462" fill="none" stroke="#f2a42a" strokeWidth="1.500" />
                <circle cx="831" cy="289" r="17" fill="#cc5559" stroke="#7a2c2c" />
                <path d="M817 282Q825 270 842 276" fill="none" stroke="#e87f82" strokeWidth="1.500" />
                <circle cx="603" cy="584" r="23" fill="#35a97e" stroke="#1a5a41" />
                <circle cx="604" cy="586" r="18" fill="#2c9169" stroke="#1a5a41" />
                {/* triad */}
                <path d="M302 618l16-5 6 4v17l-16 4-6-2z" fill="#9a9aa2" />
                <path d="M302 618l16-5 6 4-16 3zM302 618v18" fill="#c4c4ca" />
                <path d="M307 636V610" stroke="#1f3fd0" strokeWidth="2" />
                <path d="M307 636L334 632" stroke="#c83a3a" strokeWidth="1.500" />
                <circle cx="307" cy="636" r="4.500" fill="#e8e8e8" />
                <text x="302" y="609" fontSize="11" fill="#2347c8">Z</text>
                <text x="293" y="628" fontSize="11" fill="#3a7a3a">Y</text>
                <text x="334" y="636" fontSize="11" fill="#c83a3a">X</text>
              </svg>
              <span className="absolute bottom-[0px] left-[5px] font-['Liberation_Sans',sans-serif] text-[13.500px] text-[#e0a48c]">MODEL_1</span>
            </div>
          </div>
        </div>

        {/* status */}
        <div className="flex h-[23px] shrink-0 items-center pl-[6px] text-[11px] text-[#222]">选择作用连杆来定义运动副位置</div>
        <div className="flex-1 bg-[#5a9fbb]" />
      </div>

      {/* cursor highlight */}
      <div className="absolute top-[326px] left-[165px] h-[53px] w-[53px] rounded-full bg-[#f6ee5a]/55" />
      <svg className="absolute top-[345px] left-[184px]" width="14" height="20" viewBox="0 0 14 20"><path d="M1 1v15l4-3 3 6 3-1-3-6h5z" fill="#f4f4f4" stroke="#333" /></svg>

      {/* dialog */}
      <div className="absolute top-[37px] left-[851px] flex h-[690px] w-[484px] flex-col bg-[#eeeeee] text-[12px]">
        <div className="flex h-[24px] shrink-0 items-center bg-[#5a9fbb] text-white">
          <svg className="ml-[7px]" width="14" height="14" viewBox="0 0 14 14"><circle cx="7" cy="7" r="4" fill="none" stroke="#fff" strokeWidth="2" /><circle cx="7" cy="7" r="5.700" fill="none" stroke="#fff" strokeWidth="2" strokeDasharray="2 2.500" /></svg>
          <span className="ml-[7px] text-[13px] text-[#e9f4f8]">运动副</span>
          <svg className="ml-auto" width="14" height="14" viewBox="0 0 14 14"><path d="M3 4a5 5 0 11-1 4" fill="none" stroke="#fff" strokeWidth="1.600" /><path d="M1 1l1 5 4-2z" fill="#fff" /></svg>
          <svg className="mr-[9px] ml-[7px]" width="12" height="12" viewBox="0 0 12 12"><path d="M1 1l10 10M11 1L1 11" stroke="#fff" strokeWidth="2" /></svg>
        </div>
        <div className="ml-[9px] flex h-[38px] shrink-0 items-end">
          <span className="relative z-10 -mb-px flex h-[31px] w-[56px] items-center justify-center border border-b-0 border-[#cfcfcf] bg-white">定义</span>
          <span className="flex h-[28px] w-[50px] items-center justify-center border-y border-r border-[#d4d4d4] bg-[#eaeaea]">摩擦</span>
          <span className="flex h-[28px] w-[52px] items-center justify-center border-y border-r border-[#d4d4d4] bg-[#eaeaea]">驱动</span>
        </div>
        <div className="mr-[12px] ml-[9px] h-[566px] shrink-0 border border-[#d4d4d4] bg-white">
          <Section title="类型" cls="h-[67px]">
            <Select text="旋转副" cls="w-full pl-[5px]" icon={<svg className="mr-[4px]" width="16" height="15" viewBox="0 0 16 15"><path d="M1 6l8-5 6 3-1 6-9 4-4-3z" fill="#e8c24a" stroke="#9c7a1a" strokeWidth=".7" /><circle cx="6" cy="7" r="1.200" fill="#9c5a1a" /><circle cx="10" cy="5" r="1.200" fill="#9c5a1a" /></svg>} />
          </Section>
          <Section title="操作" cls="h-[169px]">
            <div className="mt-px flex h-[32px] items-center bg-[#ffdc6e]">
              <Star />
              <span className="flex-1">选择连杆 (0)</span>
              <div className="flex h-full w-[33px] items-center justify-center border-l-2 border-white"><BarIcon s={22} /></div>
            </div>
            <div className="mt-[2px] flex h-[32px] items-center">
              <Star />
              <span className="flex-1">指定原点</span>
              <Small><PtIcon /></Small>
              <Split active icon={<Bolt dot />} />
            </div>
            <div className="mt-[2px] flex h-[25px] items-center justify-between">
              <span>方位类型</span>
              <Select text="矢量" cls="w-[163px] pl-[4px]" />
            </div>
            <div className="mt-[2px] flex h-[32px] items-center">
              <Star />
              <span className="flex-1">指定矢量</span>
              <div className="mr-[2px]"><Small dim><SwapIcon /></Small></div>
              <Small><VecIcon /></Small>
              <Split icon={<VecBolt />} />
            </div>
          </Section>
          <Section title="底数" cls="h-[192px]">
            <div className="flex h-[24px] items-center gap-[6px]">
              <span className="h-[13px] w-[13px] border border-[#a0a0a0] bg-linear-to-br from-[#dcdcdc] to-[#f4f4f4]" />
              啮合连杆
            </div>
            <div className="flex h-[32px] items-center justify-between">
              <span>选择连杆 (0)</span>
              <div className="flex h-[32px] w-[32px] items-center justify-center border border-[#bdbdbd]"><BarIcon s={22} /></div>
            </div>
            <div className="mt-[2px] flex h-[32px] items-center text-[#a8a8a8]">
              <span className="flex-1">指定原点</span>
              <Small dim><PtIcon dim /></Small>
              <Split dim icon={<Bolt dim dot />} />
            </div>
            <div className="mt-[2px] flex h-[25px] items-center justify-between text-[#a8a8a8]">
              <span>方位类型</span>
              <Select dim text="矢量" cls="w-[163px] pl-[4px]" />
            </div>
            <div className="mt-[2px] flex h-[32px] items-center text-[#a8a8a8]">
              <span className="flex-1">指定矢量</span>
              <div className="mr-[2px]"><Small dim><SwapIcon /></Small></div>
              <Small dim><VecIcon dim /></Small>
              <Split dim icon={<VecBolt dim />} />
            </div>
          </Section>
          <Section title="设置" cls="h-[65px]">
            <div className="flex h-[25px] items-center justify-between">
              <span>显示比例</span>
              <div className="flex h-[24px] w-[82px] items-center overflow-hidden border border-[#b0b0b0] pl-[22px] text-[14px] tracking-[.6px] whitespace-nowrap text-[#444]">1.00000</div>
            </div>
          </Section>
          <Section title="名称" cls="h-[65px]">
            <div className="ml-[2px] flex h-[24px] items-center border border-[#b0b0b0] pl-[4px] text-[#444]">J001</div>
          </Section>
        </div>
        <div className="flex h-[18px] shrink-0 items-center justify-center border-b border-[#dcdcdc] pt-[3px]"><Caret c="#111" w={9} /></div>
        <div className="flex flex-1 justify-end gap-[5px] pt-[8px] pr-[17px]">
          <DlgBtn text="确定" />
          <DlgBtn text="应用" />
          <DlgBtn on text="取消" />
        </div>
      </div>

      {/* taskbar */}
      <div className="absolute right-0 bottom-0 left-0 flex h-[39px] items-center border-t border-[#9fb5b0] bg-linear-to-r from-[#0f3a2c] via-[#123f34] to-[#1d5f5a] text-white">
        <div className="ml-[8px] flex h-[36px] w-[36px] shrink-0 items-center justify-center rounded-full border border-[#8fb5d5] bg-linear-to-b from-[#a8cde8] to-[#20518f]">
          <svg width="22" height="22" viewBox="0 0 22 22"><path d="M1 3q5-2 9 0v7q-4-2-9 0z" fill="#e04a30" /><path d="M12 3q4-2 9 0v7q-5-2-9 0z" fill="#7ab83a" /><path d="M1 12q5-2 9 0v7q-4-2-9 0z" fill="#3a8ae0" /><path d="M12 12q4-2 9 0v7q-5-2-9 0z" fill="#f0c030" /></svg>
        </div>
        <Slot boxed cls="ml-[15px] w-[50px]"><span className="relative flex items-center justify-center"><FaInternetExplorer size={32} color="#1f8fe0" /></span></Slot>
        <span className="ml-[5px] mr-[3px] h-[36px] w-[3px] border-x border-[#5f7f7a]" />
        <Slot boxed cls="w-[58px]">
          <svg width="32" height="30" viewBox="0 0 32 30"><path d="M2 4l12-3 3 3h13v24H2z" fill="#f4dc84" stroke="#b89a40" /><path d="M4 10h24" stroke="#c9a84a" /><path d="M14 6h14v3H14z" fill="#f7f2e4" /><path d="M9 30V20l7-5 7 5v10h-4v-6h-6v6z" fill="#5e94d2" /></svg>
        </Slot>
        <Slot boxed cls="ml-[4px] w-[58px]">
          <svg width="30" height="30" viewBox="0 0 30 30"><circle cx="15" cy="15" r="15" fill="#e04a32" /><path d="M15 15L2 22.500A15 15 0 0 0 17 30z" fill="#3aa54a" /><path d="M15 15h15a15 15 0 0 1-13 15z" fill="#f3c622" /><circle cx="15" cy="15" r="7" fill="#fff" /><circle cx="15" cy="15" r="5.500" fill="#4a86e8" /></svg>
        </Slot>
        <Slot cls="ml-[4px] w-[58px]">
          <svg width="30" height="34" viewBox="0 0 30 34"><path d="M0 0l30 16-13 4-3 14-3-13z" fill="#b02a80" /></svg>
        </Slot>
        <Slot cls="ml-[4px] w-[58px]">
          <svg width="30" height="30" viewBox="0 0 30 30"><ellipse cx="15" cy="15" rx="15" ry="15" fill="#2d92d0" /><path d="M6 15l17-7-3 15-5-4-2 4-1-6z" fill="#fff" /></svg>
        </Slot>
        <Slot active cls="ml-[4px] w-[58px]">
          <svg width="34" height="34" viewBox="0 0 34 34"><ellipse cx="17" cy="19" rx="11" ry="14" fill="#2c7fd0" /><path d="M3 26c8 7 24 4 28-12" fill="none" stroke="#e8a83a" strokeWidth="3" /><path d="M10 1h12l-6 15z" fill="#d02030" /></svg>
        </Slot>
        <Slot cls="ml-[4px] w-[58px]"><Palette /></Slot>
        <Slot cls="ml-[4px] w-[58px]">
          <div className="flex h-[31px] w-[29px] items-center justify-center border-2 border-[#e0d84a] bg-[#2a2a10] font-['Liberation_Sans',sans-serif] text-[15px] leading-none font-bold text-[#e8e05a]">Fw</div>
        </Slot>
        <Slot cls="ml-[4px] w-[58px]">
          <svg width="32" height="32" viewBox="0 0 32 32"><path d="M2 6l10-4v28L2 26z" fill="#f2a62a" /><path d="M8 2l22 14L8 30z" fill="#2fa8e0" /><path d="M8 8l14 8-14 8z" fill="#5ec84a" /></svg>
        </Slot>
        <Slot cls="ml-[4px] w-[58px]">
          <div className="flex h-[32px] w-[32px] items-center justify-center rounded-full bg-[#7a0e14] font-['Liberation_Serif',serif] text-[24px] italic leading-none text-white">f</div>
        </Slot>
        <Slot boxed cls="ml-[4px] w-[58px]"><Palette /></Slot>
        <Slot boxed cls="ml-[4px] w-[58px]">
          <svg width="32" height="34" viewBox="0 0 32 34"><ellipse cx="15" cy="16" rx="14" ry="15" fill="#d8d4f0" stroke="#6a5ac0" strokeWidth="2" /><path d="M15 16V4M15 16l-8 8" stroke="#5040b0" strokeWidth="1.500" /><path d="M19 20a6 6 0 116 14h-4a6 6 0 01-2-14z" fill="#d83030" /></svg>
        </Slot>

        {/* tray */}
        <div className="ml-[81px] flex h-full items-center text-[11px]">
          <span className="w-[22px] text-center font-['Liberation_Serif',serif] text-[12px] text-[#e8f0ee]">JP</span>
          <span className="w-[18px] text-center font-['Liberation_Serif',serif] text-[16px] font-bold text-white">A</span>
          <span className="flex w-[22px] justify-center"><svg width="16" height="16" viewBox="0 0 16 16"><path d="M2 2c2-2 6 0 5 4l8 7-2 2-7-8C2 8 0 4 2 2z" fill="#b8d0e8" /></svg></span>
          <span className="flex w-[24px] justify-center"><svg width="18" height="18" viewBox="0 0 18 18"><circle cx="8" cy="8" r="8" fill="#2a80d0" /><circle cx="14" cy="14" r="3" fill="#d0502a" /></svg></span>
          <span className="flex w-[18px] items-center justify-center"><span className="flex h-[16px] w-[16px] items-center justify-center rounded-full border border-white bg-[#1f3fa8] text-[11px] leading-none font-bold text-white">?</span></span>
          <div className="flex w-[47px] pl-[6px]">
            <div className="flex flex-col gap-[3px] font-['DejaVu_Sans',sans-serif] text-[7px] leading-[9px] text-[#e2efec]">
              <span>CAPS</span><span>KANA</span>
            </div>
            <div className="ml-[6px] flex flex-col items-center gap-[5px]">
              <svg width="9" height="8" viewBox="0 0 9 8"><path d="M3 1h5v4H3zM1 3h5v4H1z" fill="none" stroke="#e2efec" /></svg>
              <Caret c="#e2efec" />
            </div>
          </div>
          <span className="flex w-[24px] justify-center"><FaWeixin size={18} color="#3fc24a" /></span>
          <span className="flex w-[24px] justify-center"><span className="flex h-[16px] w-[16px] items-center justify-center rounded-full bg-[#8a1018] font-['Liberation_Serif',serif] text-[12px] italic leading-none text-white">f</span></span>
          <span className="flex w-[24px] justify-center"><svg width="13" height="17" viewBox="0 0 13 17"><rect width="13" height="17" fill="#9ccc20" stroke="#333" /><path d="M3 4h7M3 7h7M3 10h7M3 13h7" stroke="#2a5a10" /></svg></span>
          <span className="relative flex w-[26px] justify-center"><FaQq size={17} color="#111" /><span className="absolute top-[8px] left-[13px] h-[8px] w-[10px] bg-[#e8a020]" /></span>
          <span className="flex w-[20px] justify-center"><svg width="15" height="12" viewBox="0 0 15 12"><path d="M1 0l14 7-8 1-1 4z" fill="#dfe6e4" /></svg></span>
          <span className="flex w-[26px] justify-center"><svg width="16" height="17" viewBox="0 0 16 17"><rect x="2" width="6" height="10" fill="#9aa" /><circle cx="10" cy="11" r="6" fill="#3aa63a" /><path d="M7 11l2 3 4-5" fill="none" stroke="#fff" /></svg></span>
          <span className="flex w-[24px] justify-center"><svg width="18" height="16" viewBox="0 0 18 16"><path d="M2 2h4l11 6-11 7H2z" fill="#2fa8e0" /><path d="M2 2h4v13H2z" fill="#f2a62a" /><path d="M6 5l7 3-7 4z" fill="#5ec84a" /></svg></span>
          <span className="flex w-[22px] justify-center"><svg width="14" height="14" viewBox="0 0 14 14"><path d="M1 5h3l4-4v12L4 9H1z" fill="#e8eeee" /><path d="M10 4q2 3 0 6M12 2q3 5 0 10" fill="none" stroke="#e8eeee" /></svg></span>
          <span className="flex w-[26px] justify-center"><svg width="13" height="16" viewBox="0 0 13 16"><path d="M1 3h8v12H1z" fill="#e8eeee" stroke="#333" /><path d="M4 0v4M7 0v4M1 7h11" stroke="#e8eeee" strokeWidth="1.500" /></svg></span>
          <span className="flex w-[20px] justify-center"><svg width="15" height="11" viewBox="0 0 15 11"><path d="M1 10v1M4 8v3M7 6v5M10 3v8M13 0v11" stroke="#e8eeee" strokeWidth="1.500" /></svg></span>
          <div className="flex w-[85px] flex-col items-center pl-[8px] text-[12px] leading-[18px] text-[#eef4f2]">
            <span>17:37</span>
            <span>2020/5/30</span>
          </div>
          <span className="h-[38px] w-[13px] border-x border-[#6f8a86] bg-linear-to-b from-[#7a8a88] to-[#2a4a48]" />
        </div>
      </div>
    </div>
  );
}
